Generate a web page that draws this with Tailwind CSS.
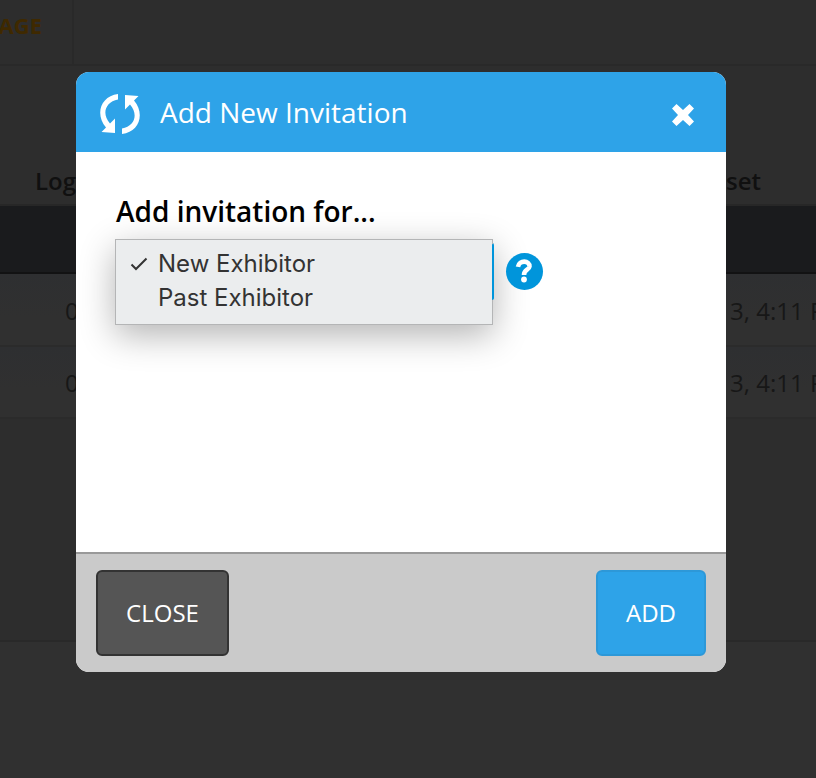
<!DOCTYPE html>
<html lang="en">
  <head>
    <meta charset="UTF-8" />
    <meta name="viewport" content="width=device-width, initial-scale=1.0" />
    <title>Add New Invitation</title>
    <script src="https://cdn.jsdelivr.net/npm/@tailwindcss/browser@4"></script>
  </head>
  <body class="relative h-screen overflow-hidden bg-[#303030] font-['Open_Sans',sans-serif]">
    <!-- Page behind the dialog -->
    <div class="flex h-full flex-col text-2xl text-[#171717]">
      <header class="flex h-[66px] shrink-0 border-b-2 border-[#292929] bg-[#2d2d2d]">
        <div class="flex w-[74px] items-start justify-end border-r-2 border-[#292929] pt-[11px] pr-[30px] text-[22px] font-bold text-[#3f2900]">
          <span>PAGE</span>
        </div>
      </header>
      <div class="flex h-[140px] shrink-0 items-end justify-between border-b-2 border-[#272727] bg-[#2d2d2d] pr-[55px] pb-[7px] pl-[35px] font-semibold text-[#101010]">
        <span>Login</span>
        <span>Reset</span>
      </div>
      <div class="h-[68px] shrink-0 border-b-2 border-[#121213] bg-[#1a1b1d]"></div>
      <div class="flex h-[73px] shrink-0 items-center justify-between border-b-2 border-[#2b2b2b] bg-linear-to-b from-[#2e2f31] to-[#303030] to-60% pt-0.5 pl-[65px]">
        <span>0</span>
        <span class="w-[86px] whitespace-nowrap">3, 4:11 PM</span>
      </div>
      <div class="flex h-[72px] shrink-0 items-center justify-between border-b-2 border-[#2b2b2b] bg-linear-to-b from-[#2e2f31] to-[#303030] to-60% pt-0.5 pl-[65px]">
        <span>0</span>
        <span class="w-[86px] whitespace-nowrap">3, 4:11 PM</span>
      </div>
      <div class="h-[223px] shrink-0 border-b-2 border-[#292929] bg-[#2d2d2d]"></div>
    </div>

    <!-- Dialog -->
    <div class="absolute top-[72px] left-[76px] flex h-[600px] w-[650px] flex-col overflow-hidden rounded-[13px] bg-white">
      <div class="flex h-20 shrink-0 items-center bg-[#2ea3e8] pr-8 pl-6 text-white">
        <svg class="mt-1 size-10" viewBox="0 0 40 40" fill="currentColor">
          <path d="M18 0V5.500C5 8 1.500 20 10 29.500L15 24.500V39L1.500 38 6 33.500C-5.500 20 1 2 18 0z" />
          <path d="M22 40V34.500C35 32 38.500 20 30 10.500L25 15.500V1L38.500 2 34 6.500C45.500 20 39 38 22 40z" />
        </svg>
        <h2 class="ml-5 text-[28px]">Add New Invitation</h2>
        <button class="mt-1.5 ml-auto" aria-label="Close">
          <svg class="size-[22px]" viewBox="0 0 22 22" fill="currentColor">
            <path d="M4.500 0 11 6 17.500 0 22 4.500 16 11 22 17.500 17.500 22 11 16 4.500 22 0 17.500 6 11 0 4.500z" />
          </svg>
        </button>
      </div>

      <div class="flex-1 px-10 pt-[39px] text-black">
        <p class="text-[28px] leading-10 font-semibold">Add invitation for...</p>
        <div class="mt-[9px] flex items-center">
          <div class="relative h-[62px] w-[378px] rounded-md border-2 border-[#0095db]">
            <!-- Open option list -->
            <ul class="absolute -top-[3px] -left-[3px] h-[86px] w-[378px] border border-[#b4b5b6] bg-[#ebedee] pt-[7px] font-[Inter,sans-serif] text-2xl leading-[34px] text-[#333] shadow-[0_10px_35px_rgba(0,0,0,0.3)]">
              <li class="flex items-center">
                <svg class="mr-[10px] ml-[14px] size-[18px]" viewBox="0 0 18 18" fill="none" stroke="currentColor" stroke-width="2">
                  <path d="M1.500 9.500 6 14 16.500 3.500" />
                </svg>
                New Exhibitor
              </li>
              <li class="pl-[42px]">Past Exhibitor</li>
            </ul>
            <!-- Edge of the select that shows beside the list -->
            <span class="absolute top-0.5 -right-[2px] h-14 w-0.5 rounded-r-sm bg-[#0095db]"></span>
          </div>
          <div class="relative ml-[11.5px] flex size-[37px] items-center justify-center rounded-full bg-[#0095db] text-white">
            <svg class="size-6" viewBox="0 0 24 24" fill="none">
              <path d="M6 7.800C7 .800 18 1.200 17.500 7.500C17 11.200 12 10.500 12 16" stroke="currentColor" stroke-width="4.600" />
              <circle cx="12" cy="20.500" r="2.900" fill="currentColor" />
            </svg>
          </div>
        </div>
      </div>

      <div class="flex h-[120px] shrink-0 items-start justify-between border-t-2 border-[#999] bg-[#cacaca] px-5 pt-4 text-2xl text-white">
        <button class="h-[86px] w-[133px] rounded-md border-2 border-[#333] bg-[#555]">CLOSE</button>
        <button class="h-[86px] w-[110px] rounded-md border-2 border-[#2d98d8] bg-[#2ea3e8]">ADD</button>
      </div>
    </div>
  </body>
</html>
